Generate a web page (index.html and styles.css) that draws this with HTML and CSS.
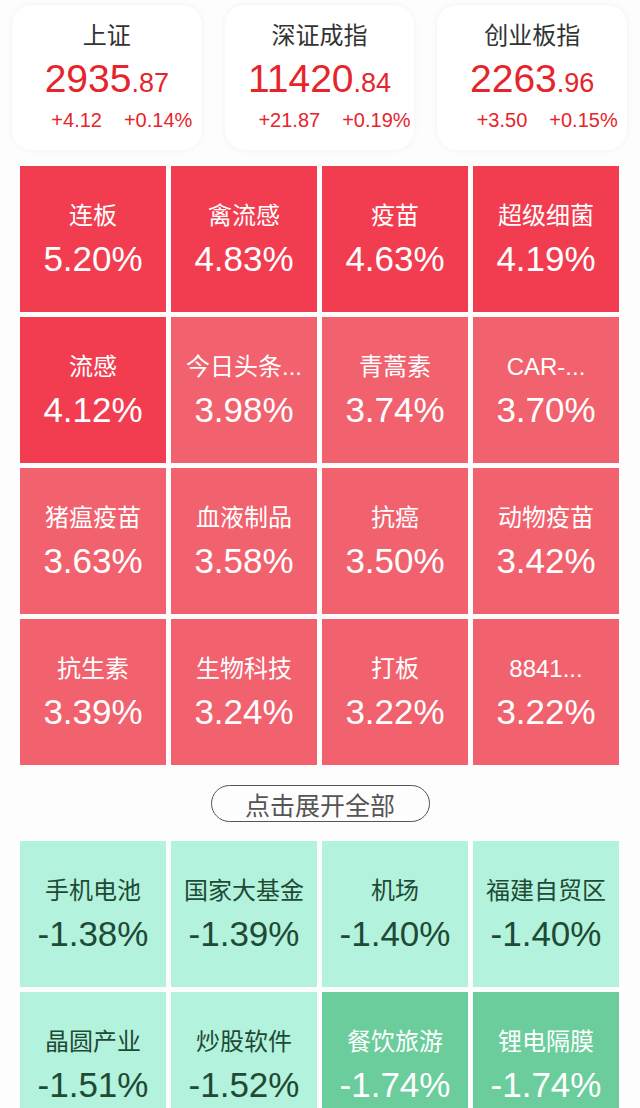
FILE: index.html
```html
<!DOCTYPE html>
<html>
  <head>
    <meta charset="utf-8">
    <title>板块热度</title>
    <link rel="stylesheet" href="styles.css">
  </head>
  <body>
    <div class="indexes">
      <div class="index-card">
        <div class="index-name">上证</div>
        <div class="index-price">2935<small>.87</small></div>
        <div class="index-change"><span>+4.12</span><span>+0.14%</span></div>
      </div>
      <div class="index-card">
        <div class="index-name">深证成指</div>
        <div class="index-price">11420<small>.84</small></div>
        <div class="index-change"><span>+21.87</span><span>+0.19%</span></div>
      </div>
      <div class="index-card">
        <div class="index-name">创业板指</div>
        <div class="index-price">2263<small>.96</small></div>
        <div class="index-change"><span>+3.50</span><span>+0.15%</span></div>
      </div>
    </div>

    <div class="blocks">
      <div class="block up-strong"><div class="block-name">连板</div><div class="block-pct">5.20%</div></div>
      <div class="block up-strong"><div class="block-name">禽流感</div><div class="block-pct">4.83%</div></div>
      <div class="block up-strong"><div class="block-name">疫苗</div><div class="block-pct">4.63%</div></div>
      <div class="block up-strong"><div class="block-name">超级细菌</div><div class="block-pct">4.19%</div></div>

      <div class="block up-strong"><div class="block-name">流感</div><div class="block-pct">4.12%</div></div>
      <div class="block up"><div class="block-name">今日头条...</div><div class="block-pct">3.98%</div></div>
      <div class="block up"><div class="block-name">青蒿素</div><div class="block-pct">3.74%</div></div>
      <div class="block up"><div class="block-name">CAR-...</div><div class="block-pct">3.70%</div></div>

      <div class="block up"><div class="block-name">猪瘟疫苗</div><div class="block-pct">3.63%</div></div>
      <div class="block up"><div class="block-name">血液制品</div><div class="block-pct">3.58%</div></div>
      <div class="block up"><div class="block-name">抗癌</div><div class="block-pct">3.50%</div></div>
      <div class="block up"><div class="block-name">动物疫苗</div><div class="block-pct">3.42%</div></div>

      <div class="block up"><div class="block-name">抗生素</div><div class="block-pct">3.39%</div></div>
      <div class="block up"><div class="block-name">生物科技</div><div class="block-pct">3.24%</div></div>
      <div class="block up"><div class="block-name">打板</div><div class="block-pct">3.22%</div></div>
      <div class="block up"><div class="block-name">8841...</div><div class="block-pct">3.22%</div></div>
    </div>

    <div class="more">
      <button class="more-btn">点击展开全部</button>
    </div>

    <div class="blocks">
      <div class="block down"><div class="block-name">手机电池</div><div class="block-pct">-1.38%</div></div>
      <div class="block down"><div class="block-name">国家大基金</div><div class="block-pct">-1.39%</div></div>
      <div class="block down"><div class="block-name">机场</div><div class="block-pct">-1.40%</div></div>
      <div class="block down"><div class="block-name">福建自贸区</div><div class="block-pct">-1.40%</div></div>

      <div class="block down"><div class="block-name">晶圆产业</div><div class="block-pct">-1.51%</div></div>
      <div class="block down"><div class="block-name">炒股软件</div><div class="block-pct">-1.52%</div></div>
      <div class="block down-strong"><div class="block-name">餐饮旅游</div><div class="block-pct">-1.74%</div></div>
      <div class="block down-strong"><div class="block-name">锂电隔膜</div><div class="block-pct">-1.74%</div></div>
    </div>
  </body>
</html>
```

FILE: styles.css
```css
* {
  margin: 0;
  padding: 0;
  box-sizing: border-box;
}

body {
  background-color: #fdfdfd;
  font-family: "Liberation Sans", "Noto Sans CJK SC", sans-serif;
  color: #333;
  overflow: hidden;
}

/* Index cards */
.indexes {
  display: flex;
  gap: 23px;
  padding: 5px 13px 0 12px;
}

.index-card {
  width: 190px;
  height: 145px;
  background-color: #fff;
  border-radius: 20px;
  box-shadow: 0 0 6px rgba(0, 0, 0, 0.05);
  display: flex;
  flex-direction: column;
  align-items: center;
  padding-top: 16px;
}

.index-name {
  font-size: 24px;
  line-height: 30px;
  color: #333;
}

.index-price {
  margin-top: 6px;
  font-size: 39px;
  line-height: 44px;
  color: #e5252b;
}

.index-price small {
  font-size: 27px;
}

.index-change {
  margin-top: 3px;
  display: flex;
  gap: 22px;
  padding-left: 30px;
  font-size: 20px;
  line-height: 24px;
  color: #e5252b;
}

/* Block grid */
.blocks {
  display: grid;
  grid-template-columns: repeat(4, 146px);
  grid-auto-rows: 146px;
  gap: 5px;
  padding-left: 20px;
}

.indexes + .blocks {
  margin-top: 16px;
}

.block {
  display: flex;
  flex-direction: column;
  align-items: center;
  padding-top: 34px;
  color: #fff;
}

.block-name {
  font-size: 24px;
  line-height: 32px;
}

.block-pct {
  margin-top: 7px;
  font-size: 35px;
  line-height: 40px;
}

.up-strong {
  background-color: #f23c50;
}

.up {
  background-color: #f1626e;
}

.down {
  background-color: #b3f2dc;
  color: #1f4a35;
}

.down-strong {
  background-color: #6acd9b;
  color: #fff;
}

/* Expand button */
.more {
  display: flex;
  justify-content: center;
  padding: 20px 0 19px;
}

.more-btn {
  width: 219px;
  height: 37px;
  border: 1.5px solid #555;
  border-radius: 19px;
  background-color: transparent;
  font-family: "Noto Sans CJK SC", sans-serif;
  font-size: 25px;
  line-height: 32px;
  color: #555;
  cursor: pointer;
}
```
